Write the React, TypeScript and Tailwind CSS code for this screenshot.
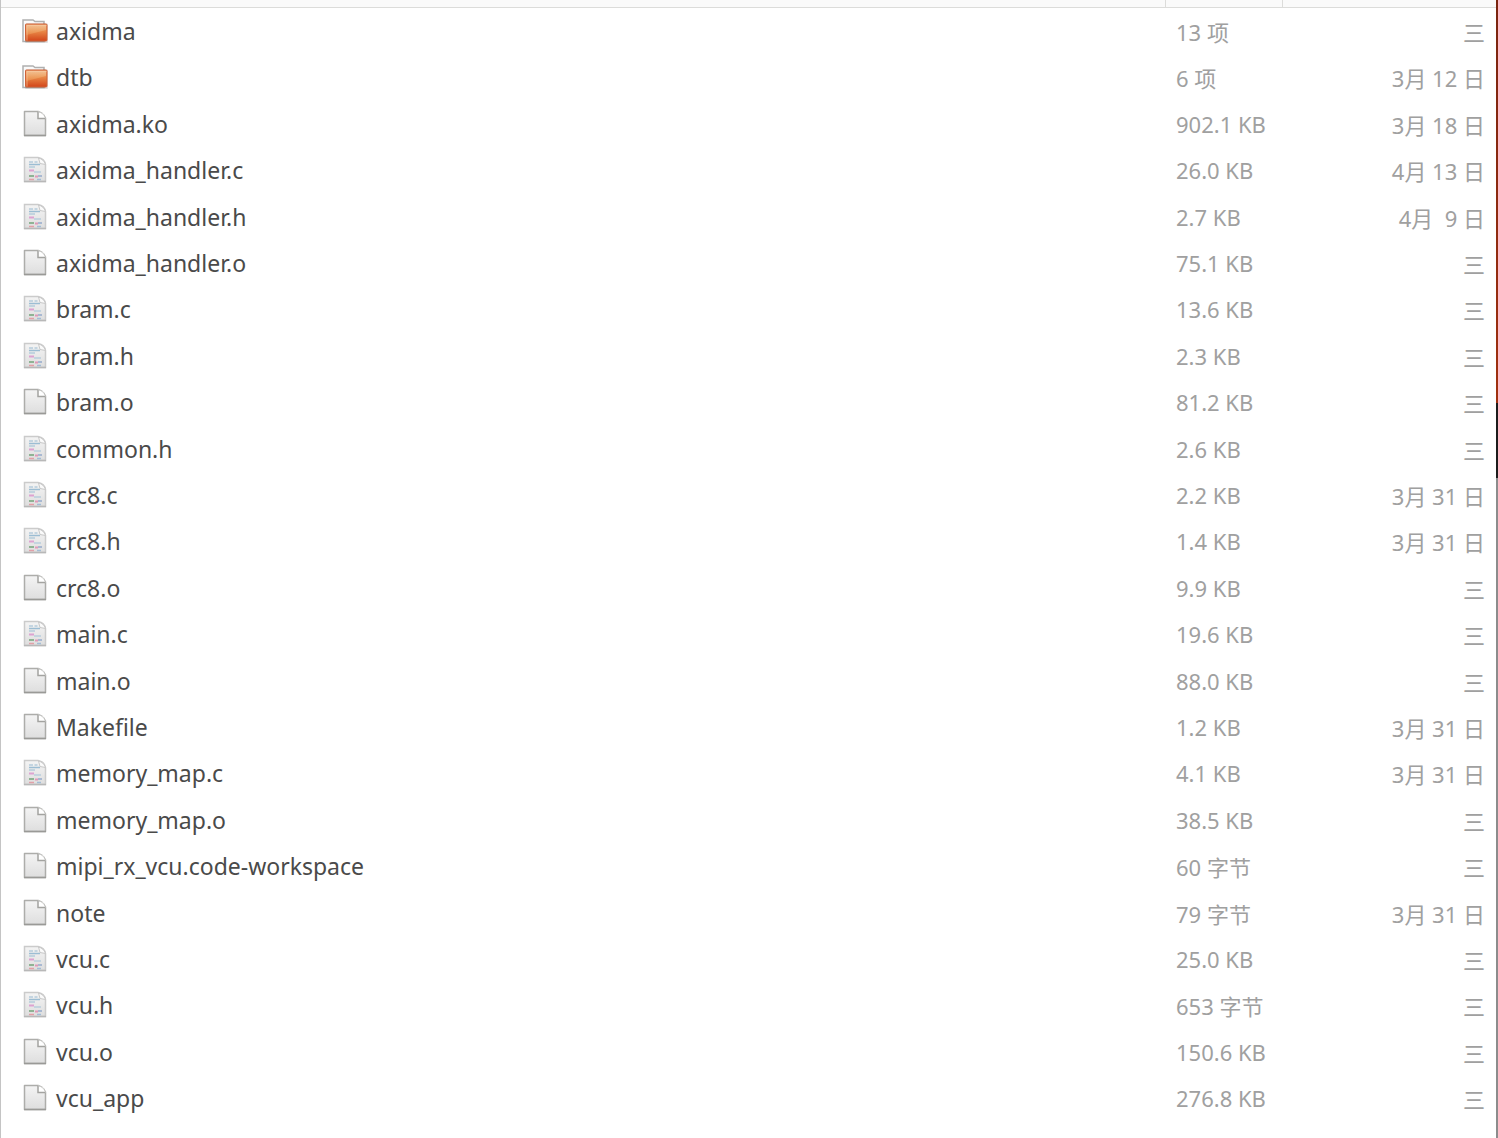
import React from 'react'
import clsx from 'clsx'

type FileKind = 'folder' | 'source' | 'file'

interface FileEntry {
  name: string
  kind: FileKind
  size: string
  modified: string
}

const FILES: FileEntry[] = [
  { name: 'axidma', kind: 'folder', size: '13 项', modified: '三' },
  { name: 'dtb', kind: 'folder', size: '6 项', modified: '3月 12 日' },
  { name: 'axidma.ko', kind: 'file', size: '902.1 KB', modified: '3月 18 日' },
  { name: 'axidma_handler.c', kind: 'source', size: '26.0 KB', modified: '4月 13 日' },
  { name: 'axidma_handler.h', kind: 'source', size: '2.7 KB', modified: '4月  9 日' },
  { name: 'axidma_handler.o', kind: 'file', size: '75.1 KB', modified: '三' },
  { name: 'bram.c', kind: 'source', size: '13.6 KB', modified: '三' },
  { name: 'bram.h', kind: 'source', size: '2.3 KB', modified: '三' },
  { name: 'bram.o', kind: 'file', size: '81.2 KB', modified: '三' },
  { name: 'common.h', kind: 'source', size: '2.6 KB', modified: '三' },
  { name: 'crc8.c', kind: 'source', size: '2.2 KB', modified: '3月 31 日' },
  { name: 'crc8.h', kind: 'source', size: '1.4 KB', modified: '3月 31 日' },
  { name: 'crc8.o', kind: 'file', size: '9.9 KB', modified: '三' },
  { name: 'main.c', kind: 'source', size: '19.6 KB', modified: '三' },
  { name: 'main.o', kind: 'file', size: '88.0 KB', modified: '三' },
  { name: 'Makefile', kind: 'file', size: '1.2 KB', modified: '3月 31 日' },
  { name: 'memory_map.c', kind: 'source', size: '4.1 KB', modified: '3月 31 日' },
  { name: 'memory_map.o', kind: 'file', size: '38.5 KB', modified: '三' },
  { name: 'mipi_rx_vcu.code-workspace', kind: 'file', size: '60 字节', modified: '三' },
  { name: 'note', kind: 'file', size: '79 字节', modified: '3月 31 日' },
  { name: 'vcu.c', kind: 'source', size: '25.0 KB', modified: '三' },
  { name: 'vcu.h', kind: 'source', size: '653 字节', modified: '三' },
  { name: 'vcu.o', kind: 'file', size: '150.6 KB', modified: '三' },
  { name: 'vcu_app', kind: 'file', size: '276.8 KB', modified: '三' }
]

// Gradients shared by every icon in the list
function IconDefs() {
  return (
    <svg width="0" height="0" className="absolute" aria-hidden="true">
      <defs>
        <linearGradient id="folder-front" x1="0" y1="0" x2="0" y2="1">
          <stop offset="0" stopColor="#eda877" />
          <stop offset="0.45" stopColor="#e88545" />
          <stop offset="1" stopColor="#d2451a" />
        </linearGradient>
        <linearGradient id="folder-shine" x1="0" y1="0" x2="0" y2="1">
          <stop offset="0" stopColor="#f6d3a8" stopOpacity="0.6" />
          <stop offset="1" stopColor="#f0a860" stopOpacity="0.4" />
        </linearGradient>
        <linearGradient id="paper" x1="0" y1="0" x2="0" y2="1">
          <stop offset="0" stopColor="#f4f4f4" />
          <stop offset="1" stopColor="#dedede" />
        </linearGradient>
      </defs>
    </svg>
  )
}

function FolderIcon() {
  return (
    <svg width="28" height="28" viewBox="0 0 28 28" className="shrink-0" aria-hidden="true">
      <path d="M2 24.5V3h10l2 1.500h9V24.500z" fill="#fafafa" stroke="#b0b0b0" strokeWidth="1.5" />
      <rect x="4" y="6.500" width="23" height="19.500" rx="1" fill="#000" opacity="0.12" />
      <rect x="4.500" y="7" width="21.500" height="17" rx="1" fill="url(#folder-front)" stroke="#cf6238" />
      <path d="M5.500 8h19.500v5L5.500 18z" fill="url(#folder-shine)" />
      <path d="M6 23.500V8.500h19.500" fill="none" stroke="#f7c9a2" opacity="0.6" />
    </svg>
  )
}

function FileIcon() {
  return (
    <svg width="28" height="28" viewBox="0 0 28 28" className="shrink-0" aria-hidden="true">
      <path
        d="M3.500 1.500H17.500L24.500 8V25.500H3.500z"
        fill="url(#paper)"
        stroke="#adadaa"
        strokeWidth="1.5"
        strokeLinejoin="round"
      />
      <path d="M17 2v6.500h7.500C23 5 20.500 2.500 17 2z" fill="#fff" />
      <path d="M17 2v6.500h7.500" fill="none" stroke="#a3a3a0" strokeWidth="1.500" />
      <path d="M17 1.500c4.500 0.500 7 3.500 7.500 7" fill="none" stroke="#c2c2c0" />
      <path d="M3 25.500h22" stroke="#9a9a97" strokeWidth="1.500" />
    </svg>
  )
}

function SourceIcon() {
  return (
    <svg width="28" height="28" viewBox="0 0 28 28" className="shrink-0" aria-hidden="true">
      <path d="M3.500 1.500H17c5 1 7 4 7.500 7V25.500H3.500z" fill="url(#paper)" stroke="#cbcbcb" strokeWidth="1.500" />
      <path d="M17.500 2l1.500 5.500 5.500 1C23 4.500 21 3 17.500 2z" fill="#fafafa" stroke="#c8c8c8" />
      <path d="M3 25.500h22" stroke="#b8b8b8" strokeWidth="1.500" />
      <g strokeWidth="1.500" fill="none">
        <path d="M8 6h4M13.500 6h3" stroke="#b5ccdb" />
        <path d="M8 8.500h11" stroke="#9cbdd3" />
        <path d="M8 11h6" stroke="#b5ccdb" />
        <path d="M8 14.500h5" stroke="#dda3d1" strokeWidth="2" />
        <path d="M13 16h7" stroke="#b9cedc" />
        <path d="M8 20h5" stroke="#8fb394" strokeWidth="2" />
        <path d="M14 20.500h3" stroke="#e09ab8" strokeWidth="2" />
        <path d="M17 20h4" stroke="#a9b9d2" strokeWidth="2" />
        <path d="M8 23.500h5" stroke="#e2a0a8" />
        <path d="M16 23.500h4" stroke="#a3bdd6" />
      </g>
    </svg>
  )
}

function EntryIcon({ kind }: { kind: FileKind }) {
  if (kind === 'folder') return <FolderIcon />
  if (kind === 'source') return <SourceIcon />
  return <FileIcon />
}

function FileRow({ file }: { file: FileEntry }) {
  const hasHanSize = /[项字]/.test(file.size)

  return (
    <tr className="h-[46px] nth-[5n]:h-[47px] nth-[5n+3]:h-[47px]">
      <td className="p-0 pl-5">
        <div className="flex items-center gap-[7px] text-[23px] leading-7 text-[#4a4a4a]">
          <EntryIcon kind={file.kind} />
          <span>{file.name}</span>
        </div>
      </td>
      <td className={clsx('p-0 pl-2.5 text-[22px] leading-7 text-[#a0a0a0]', hasHanSize && 'pt-0.5')}>
        {file.size}
      </td>
      <td className="p-0 pt-0.5 pr-[11px] text-right text-[22px] leading-7 whitespace-pre text-[#a0a0a0]">
        {file.modified}
      </td>
    </tr>
  )
}

export default function App() {
  return (
    <div className="flex min-h-screen bg-white font-['Noto_Sans','Noto_Sans_CJK_SC',sans-serif]">
      <IconDefs />

      {/* File list */}
      <main className="flex-1 border-l border-[#c4c4c4]">
        <table className="w-full table-fixed border-separate border-spacing-0">
          <colgroup>
            <col />
            <col className="w-[117px]" />
            <col className="w-[213px]" />
          </colgroup>
          <thead>
            <tr className="h-2 bg-[#fafafa]">
              <th scope="col" aria-label="名称" className="border-r border-b border-[#dcdcda] p-0" />
              <th scope="col" aria-label="大小" className="border-r border-b border-[#dcdcda] p-0" />
              <th scope="col" aria-label="修改" className="border-b border-[#dcdcda] p-0" />
            </tr>
          </thead>
          <tbody>
            {FILES.map((file) => (
              <FileRow key={file.name} file={file} />
            ))}
          </tbody>
        </table>
      </main>

      {/* Desktop showing past the window edge */}
      <div className="flex w-0.5 flex-col">
        <div className="h-[403px] bg-linear-to-b from-[#7a2410] to-[#a03010]" />
        <div className="h-[75px] bg-[#1c1c1c]" />
        <div className="flex-1 bg-[#8c8c8c]" />
      </div>
    </div>
  )
}
